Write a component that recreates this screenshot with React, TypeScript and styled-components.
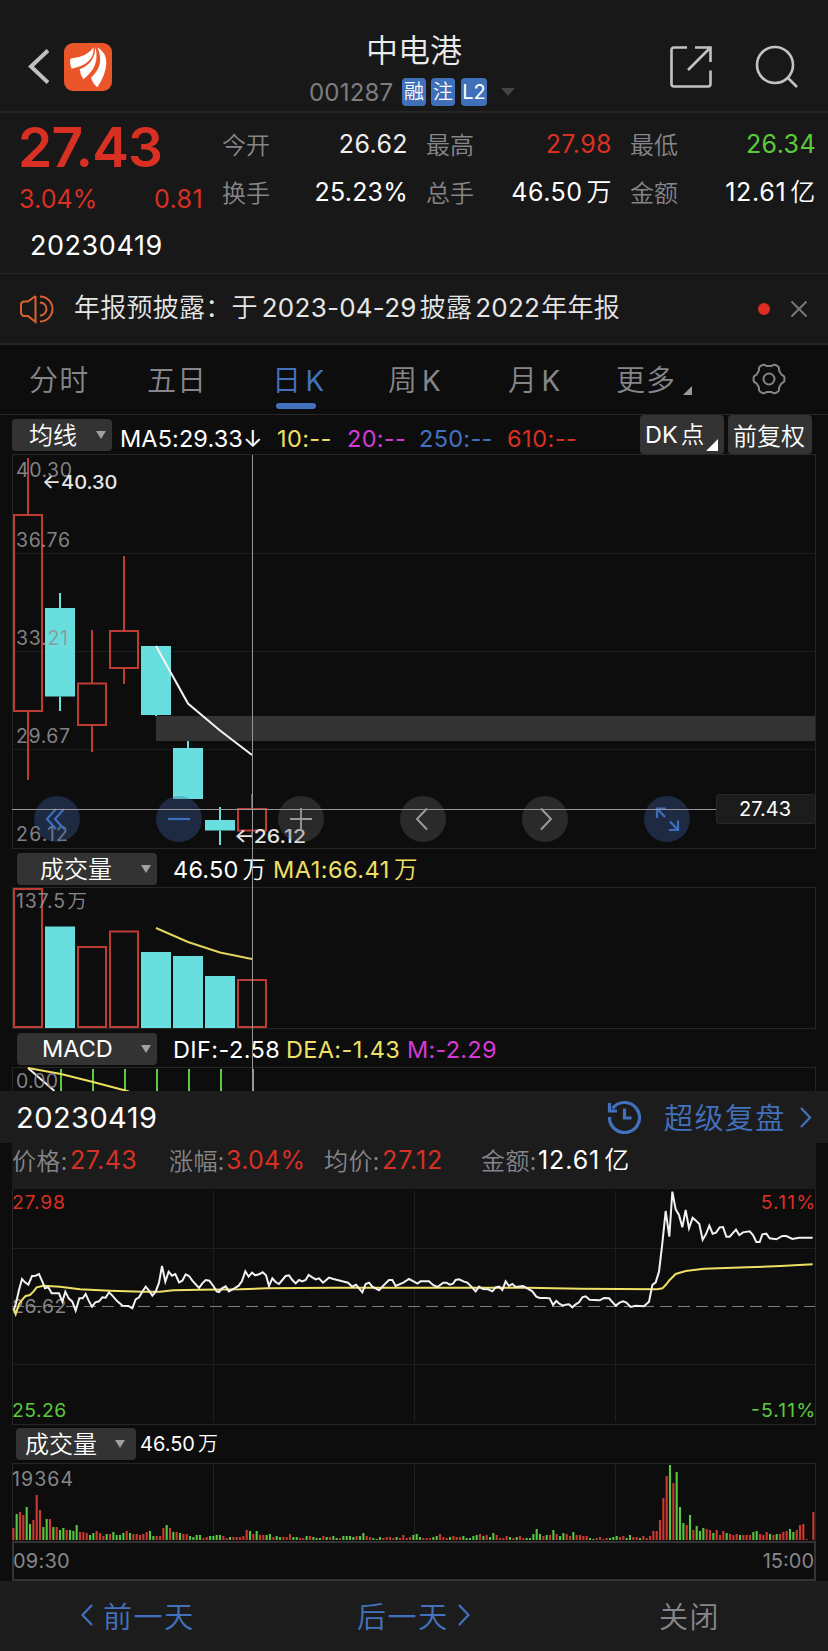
import React from 'react';
import styled, { createGlobalStyle } from 'styled-components';

const c = {
  red: '#d93024',
  candle: '#bd3c35',
  green: '#5bcb3c',
  cyan: '#68dfde',
  yellow: '#efe065',
  magenta: '#d63ad6',
  blue: '#4272bd',
  gray: '#86868a',
  line: '#262626',
  page: '#0d0d0d',
  head: '#181818',
  panel: '#1c1c1c',
  chip: '#333333',
};

const Global = createGlobalStyle`
  * { box-sizing: border-box; }
  body { margin: 0; background: ${c.page}; }
  body, button { font-family: Inter, "Noto Sans CJK SC", sans-serif; }
  svg { display: block; }
`;

const Screen = styled.div`
  position: relative;
  width: 828px;
  height: 1651px;
  overflow: hidden;
  display: flex;
  flex-direction: column;
  background: ${c.page};
  color: #fff;
`;

type TextProps = {
  $s: number;
  $c?: string;
  $ls?: number;
  $w?: number;
  $ml?: number;
  $weight?: number;
};
const Text = styled.span<TextProps>`
  display: block;
  flex: none;
  white-space: nowrap;
  font-size: ${p => p.$s}px;
  color: ${p => p.$c || '#fff'};
  letter-spacing: ${p => p.$ls || 0}px;
  font-weight: ${p => p.$weight || 400};
  margin-left: ${p => p.$ml || 0}px;
  width: ${p => (p.$w ? p.$w + 'px' : 'auto')};
`;
const Han = styled(Text)`
  font-family: "Noto Sans CJK SC DemiLight", "Noto Sans CJK SC", sans-serif;
  font-weight: 350;
`;
/* Chinese unit or word that follows Latin text on the same line */
const Unit = styled.span<{ $gap?: number; $after?: number }>`
  font-family: "Noto Sans CJK SC DemiLight", "Noto Sans CJK SC", sans-serif;
  font-weight: 350;
  line-height: 0;
  margin-left: ${p => p.$gap ?? 4}px;
  margin-right: ${p => p.$after || 0}px;
`;
const Latin = styled.span`
  font-family: Inter, sans-serif;
  font-weight: 400;
  font-size: 0.96em;
  line-height: 0;
  margin-left: 4px;
`;

/* header */
const Header = styled.header`
  flex: none;
  height: 113px;
  background: ${c.head};
  border-bottom: 2px solid ${c.line};
  display: grid;
  grid-template-columns: 286px 256px 286px;
`;
const HeadLeft = styled.div`
  display: flex;
  align-items: flex-start;
  gap: 15px;
  padding: 43px 0 0 28px;
`;
const HeadRight = styled.div`
  display: flex;
  align-items: flex-start;
  gap: 42px;
  padding: 45px 0 0 127px;
`;
const HeadMid = styled.div`
  display: flex;
  flex-direction: column;
  padding-top: 28px;
`;
const Title = styled(Han)`
  text-align: center;
  line-height: 40px;
`;
const CodeRow = styled.div`
  display: flex;
  align-items: center;
  height: 28px;
  margin-top: 10px;
  padding-left: 23px;
`;
const Badge = styled.span<{ $w: number; $ml: number }>`
  width: ${p => p.$w}px;
  margin-left: ${p => p.$ml}px;
  height: 28px;
  line-height: 28px;
  border-radius: 4px;
  background: #4070ba;
  color: #fff;
  font-size: 20px;
  text-align: center;
`;
const Caret = styled.i<{ $w: number; $h: number; $c: string; $ml?: number }>`
  display: block;
  flex: none;
  width: ${p => p.$w}px;
  height: ${p => p.$h}px;
  margin-left: ${p => p.$ml || 0}px;
  background: ${p => p.$c};
  clip-path: polygon(0 0, 100% 0, 50% 100%);
`;
const Corner = styled.i<{ $s: number; $c: string; $mb: number }>`
  display: block;
  flex: none;
  align-self: flex-end;
  width: ${p => p.$s}px;
  height: ${p => p.$s}px;
  margin-bottom: ${p => p.$mb}px;
  background: ${p => p.$c};
  clip-path: polygon(100% 0, 100% 100%, 0 100%);
`;

/* quote */
const Quote = styled.section`
  flex: none;
  height: 161px;
  background: ${c.head};
  border-bottom: 1px solid ${c.line};
  display: grid;
  grid-template-columns: 222px 1fr;
  grid-template-rows: 108px 1fr;
`;
const PriceBlock = styled.div`
  padding: 6px 19px 0 18px;
`;
const BigPrice = styled(Text)`
  line-height: 56px;
`;
const Change = styled.div`
  display: flex;
  justify-content: space-between;
  line-height: 32px;
  margin-top: 8px;
  padding-left: 1px;
`;
const Stats = styled.dl`
  margin: 0;
  padding-top: 8px;
  display: grid;
  grid-template-columns: 186px 204px 204px;
  grid-auto-rows: 48px;
`;
const Stat = styled.div<{ $pl: number }>`
  display: flex;
  justify-content: space-between;
  line-height: 47px;
  padding-left: ${p => p.$pl}px;
`;
const StatName = styled(Han)`
  line-height: 45px;
`;
const QuoteDate = styled(Text)`
  grid-column: 1 / -1;
  padding-left: 30px;
  line-height: 49px;
`;

/* notice */
const Notice = styled.section`
  flex: none;
  height: 71px;
  background: ${c.head};
  border-bottom: 2px solid ${c.line};
  display: flex;
  align-items: center;
  padding-left: 19px;
`;
const NoticeText = styled(Text)`
  padding-bottom: 3px;
`;
const Dot = styled.i`
  width: 12px;
  height: 12px;
  border-radius: 50%;
  background: #dc2d21;
  margin-left: auto;
`;
const CloseX = styled.svg`
  margin: 0 20px 0 20px;
`;

/* tabs */
const Tabs = styled.nav`
  flex: none;
  height: 70px;
  border-bottom: 1px solid ${c.line};
  display: flex;
  line-height: 66px;
  padding-left: 29px;
`;
const Tab = styled(Han)<{ $on?: boolean }>`
  position: relative;
  &::after {
    content: '';
    display: ${p => (p.$on ? 'block' : 'none')};
    position: absolute;
    left: 4px;
    bottom: 5px;
    width: 40px;
    height: 6px;
    border-radius: 3px;
    background: ${c.blue};
  }
`;
const Gear = styled.svg`
  margin: 17px 0 0 60px;
`;

/* indicator rows */
const Row = styled.div<{ $h: number; $pl: number; $line: number }>`
  flex: none;
  height: ${p => p.$h}px;
  padding-left: ${p => p.$pl}px;
  display: flex;
  line-height: ${p => p.$line}px;
`;
const Chip = styled.button<{ $w: number; $h: number; $mt?: number; $ml?: number; $pl: number }>`
  flex: none;
  border: 0;
  width: ${p => p.$w}px;
  height: ${p => p.$h}px;
  margin: ${p => p.$mt || 0}px 0 0 ${p => p.$ml || 0}px;
  padding: 0 0 0 ${p => p.$pl}px;
  border-radius: 4px;
  background: ${c.chip};
  display: flex;
  align-items: center;
  text-align: left;
  line-height: ${p => p.$h - 2}px;
`;
const ChipHan = styled(Han)`
  padding-bottom: 2px;
`;
const Plot = styled.svg<{ $h: number }>`
  flex: none;
  width: 804px;
  height: ${p => p.$h}px;
  margin-left: 12px;
  font-family: Inter, "Noto Sans CJK SC", sans-serif;
`;
const KArea = styled.div`
  position: relative;
  flex: none;
`;
const Controls = styled.div`
  position: absolute;
  left: 34px;
  top: 342px;
  display: flex;
  gap: 76px;
`;
const Round = styled.span<{ $blue?: boolean }>`
  width: 46px;
  height: 46px;
  border-radius: 50%;
  display: flex;
  align-items: center;
  justify-content: center;
  background: ${p => (p.$blue ? 'rgba(59,96,164,.35)' : 'rgba(96,96,100,.35)')};
  color: ${p => (p.$blue ? '#3c6fc0' : '#9a9a9d')};
`;
const CrossH = styled.i`
  position: absolute;
  left: 12px;
  top: 355px;
  width: 704px;
  height: 1px;
  background: #969696;
`;
const CrossV = styled.i`
  position: absolute;
  left: 252px;
  top: 455px;
  width: 1px;
  height: 636px;
  background: #969696;
`;
const PriceTag = styled.span`
  position: absolute;
  left: 716px;
  top: 340px;
  width: 100px;
  height: 30px;
  line-height: 29px;
  border: 1px solid #282828;
  border-radius: 3px;
  background: #1c1c1c;
  font-size: 20px;
  padding-left: 22px;
`;

/* replay panel */
const PanelHead = styled.div`
  flex: none;
  height: 52px;
  background: ${c.panel};
  display: flex;
  align-items: center;
  padding-left: 16px;
`;
const ReplayLink = styled(Han)`
  padding-bottom: 2px;
`;
const Info = styled.div`
  flex: none;
  width: 804px;
  height: 46px;
  margin-left: 12px;
  background: ${c.panel};
  display: flex;
  line-height: 34px;
`;
const Times = styled.div`
  flex: none;
  width: 804px;
  height: 40px;
  margin-left: 12px;
  border: 2px solid #333;
  display: flex;
  justify-content: space-between;
  line-height: 37px;
`;
const Footer = styled.footer`
  flex: none;
  height: 70px;
  background: ${c.panel};
  display: flex;
  align-items: center;
  padding: 0 0 2px 81px;
`;

const Logo = () => (
  <svg width="48" height="48" viewBox="192 129 144 144">
    <rect x="192" y="129" width="144" height="144" rx="27" fill="#ea5529" />
    <g fill="#fff">
      <path d="M210 180Q211 175 217 175Q262 170 281 142Q284 193 215 206Q209 193 210 180Z" />
      <path d="M286 142Q302 198 250 238Q241 225 239 208Q285 190 286 142Z" />
      <path d="M292 142Q320 158 319 190Q317 226 292 262Q278 250 273 233Q316 195 292 142Z" />
    </g>
  </svg>
);

const gear = Array.from({ length: 120 }, (_, i) => {
  const t = (i / 120) * Math.PI * 2;
  const r = 14.2 + 1.3 * Math.tanh(2 * Math.cos(6 * t));
  return `${(17 + r * Math.cos(t)).toFixed(2)},${(17 + r * Math.sin(t)).toFixed(2)}`;
}).join(' ');

const candles = [
  { up: true, top: 515, bottom: 712, high: 458, low: 780, vol: 888 },
  { up: false, top: 608, bottom: 696.5, high: 593, low: 711, vol: 926.5 },
  { up: true, top: 683.5, bottom: 726, high: 630, low: 752, vol: 946 },
  { up: true, top: 631, bottom: 669, high: 556, low: 684, vol: 930.5 },
  { up: false, top: 646, bottom: 715, high: 646, low: 716, vol: 952 },
  { up: false, top: 748, bottom: 799, high: 741, low: 799, vol: 956 },
  { up: false, top: 820, bottom: 830.5, high: 807, low: 845, vol: 976 },
  { up: true, top: 809, bottom: 831.5, high: 794, low: 838, vol: 979 },
];

const ticks =
  'r12 g26 r28 r25 g33 g16 r20 r45 r30 g13 g21 r21 g13 r13 g10 g12 r10 g10 g9 g15 r8 r8 r7 g5 g7 r9 r7 r4 g6 r6 g8 g5 g5 g7 r9 g7 r6 r6 r5 r6 r8 g9 g4 r4 r4 r12 g15 r12 g8 r8 g7 r6 r6 g4 g3 g5 g5 r2 r3 g4 g4 g5 g5 r4 r2 g3 r3 r3 r3 r4 r10 g9 r6 g9 r5 r5 g5 g6 r3 g4 g3 r3 r3 r6 g3 g3 r2 r2 g4 r4 g3 g2 g2 r4 g3 r3 g4 g2 r2 g4 g4 g4 g3 r4 g4 g7 r4 r3 g2 g1 g3 r2 r3 r3 r2 g3 r2 r5 r2 r3 g5 g6 g3 r2 r2 r2 g3 g4 r6 r3 r2 g3 r4 r3 r3 g4 g2 g2 g4 g5 r6 g4 r5 g3 g7 r5 r2 r2 r4 g3 r2 g3 r4 r2 g2 g2 g6 g11 g6 r4 g5 r5 g10 r6 g4 g7 r6 r4 g8 r5 r5 r4 r4 g2 g1 r2 r3 r1 r2 g2 g3 g4 r3 r4 g2 g5 r3 r3 g2 r4 r2 r4 r9 r9 r20 r42 r64 g75 r57 g68 g33 g17 r15 g25 r10 g14 g9 g12 r11 r10 g7 r10 r5 r9 g7 r6 r5 r6 g5 r5 r5 r5 g8 g9 r6 r5 r8 g6 r5 g6 r6 r8 r9 g11 g8 r10 r15 r16 r1 r0 r28'.split(' ');

const morning =
  '42,688 48,670 57,630 66,597 75,607 85,614 96,588 107,587 117,582 127,605 135,625 145,622 155,640 177,640 187,665 196,635 206,655 217,665 227,692 238,655 248,655 257,642 266,662 276,680 286,667 297,664 307,652 317,653 327,637 337,647 352,664 368,677 385,678 397,685 407,658 417,652 427,635 437,620 447,632 457,647 467,635 477,608 486,558 496,605 506,575 516,587 526,582 537,607 547,602 557,583 567,588 577,602 597,624 607,610 617,600 628,602 640,618 650,634 657,636 667,624 677,619 687,634 700,627 716,617 726,603 736,574 746,590 756,578 766,586 777,583 788,577 798,586 807,618 817,595 827,606 837,612 847,600 857,588 867,586 877,600 887,610 897,600 907,604 917,600 926,585 937,592 947,598 957,595 969,608 987,593 1000,597 1027,604 1044,608 1057,620 1068,614 1087,637 1097,612 1107,608 1117,620 1137,631 1150,617 1167,600 1177,600 1187,618 1210,608 1227,597';
const afternoon =
  '1242,605 1252,611 1262,604 1287,604 1299,615 1312,621 1330,608 1339,608 1349,614 1359,611 1367,600 1377,598 1392,605 1402,608 1414,620 1427,634 1437,620 1449,627 1464,628 1477,634 1487,622 1497,620 1507,630 1517,604 1527,618 1537,612 1547,621 1569,618 1587,628 1597,634 1609,650 1619,654 1639,654 1649,655 1659,675 1669,663 1679,672 1689,677 1697,674 1707,673 1717,682 1727,673 1737,667 1747,652 1757,649 1769,659 1799,661 1812,654 1827,655 1847,677 1859,668 1869,664 1879,668 1892,681 1907,677 1932,679 1947,665 1957,615 1967,607 1977,575 1987,490 1997,393 2008,470 2017,335 2027,388 2037,405 2047,442 2057,390 2067,445 2078,413 2088,422 2098,432 2108,479 2118,462 2128,437 2138,461 2148,458 2159,442 2169,441 2179,470 2189,470 2208,449 2218,465 2229,457 2249,454 2259,465 2269,486 2279,486 2287,463 2299,461 2309,475 2329,478 2347,468 2359,468 2377,477 2397,473 2438,473';
const average =
  '40,685 47,703 57,672 70,655 77,648 90,645 100,635 110,622 130,617 180,620 240,628 330,632 430,635 480,635 520,631 600,629 720,628 800,625 1000,623 1242,623 1582,623 1742,626 1972,628 1987,625 1997,615 2009,600 2027,582 2057,573 2112,566 2242,562 2342,558 2438,553';

const axis = (y: number, t: string, len: number) => (
  <text key={t} x="16" y={y} fontSize="19.5" fill="#929296" fillOpacity=".9" textLength={len}>{t}</text>
);

const KPlot = () => (
  <Plot $h={395} viewBox="12 454 804 395">
    <g shapeRendering="crispEdges" fill="none" strokeWidth="1">
      <path d="M13 553.5H815M13 651.5H815M13 749.5H815" stroke="#1c1c1c" />
      <rect x="12.5" y="454.5" width="803" height="394" stroke={c.line} />
    </g>
    <rect x="156" y="716" width="659" height="25" fill="#333" />
    {candles.map((k, i) => {
      const x = 13 + i * 32;
      const col = k.up ? c.candle : c.cyan;
      return (
        <g key={i}>
          <path d={`M${x + 15} ${k.high}V${k.top}M${x + 15} ${k.bottom}V${k.low}`} stroke={col} strokeWidth="2" />
          {k.up ? (
            <rect x={x + 1} y={k.top} width="28" height={k.bottom - k.top - 1} fill="none" stroke={col} strokeWidth="2" />
          ) : (
            <rect x={x} y={k.top} width="30" height={k.bottom - k.top} fill={col} />
          )}
        </g>
      );
    })}
    <path d="M156 646L188 703.5L220 730.5L252 755" fill="none" stroke="#f4f4f4" strokeWidth="2" />
    {axis(477, '40.30', 56)}
    {axis(547, '36.76', 54)}
    {axis(645, '33.21', 52)}
    {axis(743, '29.67', 54)}
    {axis(841, '26.12', 52)}
    <g fontSize="19" fontWeight="500" fill="#e6e6e6">
      <text x="42" y="488.5" textLength="75.500" lengthAdjust="spacingAndGlyphs">←40.30</text>
      <text x="234" y="843" textLength="72" lengthAdjust="spacingAndGlyphs">←26.12</text>
    </g>
  </Plot>
);

const VolPlot = () => (
  <Plot $h={142} viewBox="12 887 804 142">
    <rect x="12.5" y="887.5" width="803" height="141" fill="none" stroke={c.line} shapeRendering="crispEdges" />
    {candles.map((k, i) =>
      k.up ? (
        <rect key={i} x={14 + i * 32} y={k.vol + 1} width="28" height={1026 - k.vol} fill="none" stroke={c.candle} strokeWidth="2" />
      ) : (
        <rect key={i} x={13 + i * 32} y={k.vol} width="30" height={1028 - k.vol} fill={c.cyan} />
      )
    )}
    <path d="M156 928L188 942L220 952.5L252 959" fill="none" stroke="#e2d45c" strokeWidth="2" />
    {axis(908, '137.5', 49)}
    <text x="67.5" y="908" fontSize="19.5" fill={c.gray} fontWeight="350">万</text>
  </Plot>
);

const MacdPlot = () => (
  <Plot $h={24} viewBox="12 1067 804 24">
    <path d="M12.5 1091V1067.5H815.5V1091" fill="none" stroke={c.line} shapeRendering="crispEdges" />
    {[61, 93, 125, 157, 189, 221, 253].map(x => (
      <rect key={x} x={x - 1} y="1069" width="2" height="22" fill={c.green} />
    ))}
    <path d="M28 1068L54.5 1091" stroke="#f4f4f4" strokeWidth="2" />
    <path d="M28 1068L61 1074L93 1082L129 1091.5" fill="none" stroke={c.yellow} strokeWidth="2" />
    {axis(1087.5, '0.00', 42)}
  </Plot>
);

const DayPlot = () => (
  <Plot $h={236} viewBox="36 327 2412 708">
    <g shapeRendering="crispEdges" fill="none" strokeWidth="3">
      <path d="M640.5 333V1026M1243.5 333V1026M1846.5 333V1026M39 505.5H2445M39 853.5H2445" stroke="#1e1e1e" />
      <path d="M37.5 327V1033.5H2446.5V327" stroke={c.line} />
      <path d="M36 679.5H2445" stroke="#7c7c7c" strokeDasharray="36 18" />
    </g>
    <g fontSize="58">
      <text x="36" y="387" fill={c.red} textLength="159">27.98</text>
      <text x="36" y="699" fill={c.gray} textLength="163">26.62</text>
      <text x="36" y="1011" fill={c.green} textLength="163">25.26</text>
      <text x="2282" y="387" fill={c.red} textLength="164">5.11%</text>
      <text x="2253" y="1011" fill={c.green} textLength="193">-5.11%</text>
    </g>
    <polyline points={average} fill="none" stroke={c.yellow} strokeWidth="6" />
    <polyline points={`${morning} ${afternoon}`} fill="none" stroke="#f2f2f2" strokeWidth="6" />
  </Plot>
);

const TickPlot = () => (
  <Plot $h={78} viewBox="12 1463 804 78">
    <g shapeRendering="crispEdges" fill="none">
      <path d="M213.5 1465V1540M414.5 1465V1540M615.5 1465V1540" stroke="#222" />
      <path d="M12.5 1541V1463.5H815.5V1541" stroke={c.line} />
    </g>
    {ticks.map((t, i) => {
      const h = Number(t.slice(1));
      return <rect key={i} x={12.3 + (i * 10) / 3} y={1540 - h} width="2.1" height={h} fill={t[0] === 'r' ? '#c93a31' : '#58c540'} />;
    })}
    <text x="12" y="1486" fontSize="19.5" fill={c.gray} textLength="61">19364</text>
  </Plot>
);

const Ico = ({ d, w = 46, sw = 2.2 }: { d: string; w?: number; sw?: number }) => (
  <svg width={w} height={w} viewBox={`0 0 ${w} ${w}`} fill="none" stroke="currentColor" strokeWidth={sw}>
    <path d={d} />
  </svg>
);

const Chev = ({ dir, h, col }: { dir: 'l' | 'r'; h: number; col: string }) => {
  const w = h / 2;
  const d = dir === 'l' ? `M${w + 1} 1L1.5 ${w + 1}L${w + 1} ${h + 1}` : `M1 1L${w + 0.5} ${w + 1}L1 ${h + 1}`;
  return (
    <svg width={w + 3} height={h + 2} fill="none" stroke={col} strokeWidth="2.2">
      <path d={d} />
    </svg>
  );
};

const stats = [
  { k: '今开', v: '26.62', unit: '', col: '#eee', ls: 0.4 },
  { k: '最高', v: '27.98', unit: '', col: c.red, ls: 0.4 },
  { k: '最低', v: '26.34', unit: '', col: c.green, ls: 0.4 },
  { k: '换手', v: '25.23%', unit: '', col: '#fff', ls: 0.2 },
  { k: '总手', v: '46.50', unit: '万', col: '#fff', ls: 0.5 },
  { k: '金额', v: '12.61', unit: '亿', col: '#fff', ls: 0.7 },
];

export default function App() {
  return (
    <Screen>
      <Global />
      <Header>
        <HeadLeft>
          <svg width="21" height="48" fill="none" stroke="#c0c0c0" strokeWidth="4">
            <path d="M20 7.5L3 23.5L20 39.5" />
          </svg>
          <Logo />
        </HeadLeft>
        <HeadMid>
          <Title $s={32} $c="#ececec">中电港</Title>
          <CodeRow>
            <Text $s={24} $c="#7d7d81" $ls={0.2} $w={84}>001287</Text>
            <Badge $w={24} $ml={9}><Unit $gap={0}>融</Unit></Badge>
            <Badge $w={24} $ml={5}><Unit $gap={0}>注</Unit></Badge>
            <Badge $w={26} $ml={6}>L2</Badge>
            <Caret $w={14} $h={8} $c="#444" $ml={14} />
          </CodeRow>
        </HeadMid>
        <HeadRight>
          <svg width="44" height="44" fill="none" stroke="#c2c2c2" strokeWidth="2.6">
            <path d="M18 2.5H5Q2.5 2.5 2.5 5V39Q2.5 41.5 5 41.5H39Q41.5 41.5 41.5 39V25.5M26 2.5H41.5V17M41 3L19 25" />
          </svg>
          <svg width="44" height="44" fill="none" stroke="#c2c2c2" strokeWidth="2.6">
            <circle cx="20" cy="20" r="18" />
            <path d="M33 33L42 42" />
          </svg>
        </HeadRight>
      </Header>

      <Quote>
        <PriceBlock>
          <BigPrice $s={55} $c={c.red} $weight={600} $ls={-0.8}>27.43</BigPrice>
          <Change>
            <Text $s={25} $c={c.red} $ls={0.1}>3.04%</Text>
            <Text $s={25} $c={c.red} $ls={0.4}>0.81</Text>
          </Change>
        </PriceBlock>
        <Stats>
          {stats.map((s, i) => (
            <Stat key={s.k} $pl={i % 3 ? 18 : 0}>
              <StatName as="dt" $s={24} $c={c.gray}>{s.k}</StatName>
              <Text as="dd" $s={25} $c={s.col} $ls={s.ls}>
                {s.v}
                {s.unit && <Unit>{s.unit}</Unit>}
              </Text>
            </Stat>
          ))}
        </Stats>
        <QuoteDate $s={27} $ls={0.55}>20230419</QuoteDate>
      </Quote>

      <Notice>
        <svg width="36" height="30" fill="none" stroke="#d9622f" strokeWidth="2">
          <path d="M16.5 2V28L9 22H4.500Q2 21 2 18V11Q2 8.500 4.500 7.500H9L16.500 2M21 2.500A12.500 12.500 0 0 1 21 27.500M21 8.500A6.500 6.500 0 0 1 21 21.500" />
        </svg>
        <NoticeText $s={26} $c="#e6e6e6" $ml={19} $ls={0.25}>
          <Unit $gap={0} $after={4}>年报预披露：于</Unit>
          2023-04-29
          <Unit $gap={3} $after={3}>披露</Unit>
          2022
          <Unit $gap={1}>年年报</Unit>
        </NoticeText>
        <Dot />
        <CloseX width="18" height="18" fill="none" stroke="#77777a" strokeWidth="2">
          <path d="M1.500 1.500L16.500 16.500M16.500 1.500L1.500 16.500" />
        </CloseX>
      </Notice>

      <Tabs>
        <Tab $s={29} $c={c.gray} $w={118} $ls={1.3}>分时</Tab>
        <Tab $s={29} $c={c.gray} $w={125} $ls={1}>五日</Tab>
        <Tab $s={29} $c={c.blue} $w={116} $ls={0.5} $on>日<Latin>K</Latin></Tab>
        <Tab $s={29} $c={c.gray} $w={120} $ls={1}>周<Latin>K</Latin></Tab>
        <Tab $s={29} $c={c.gray} $w={108} $ls={0.5}>月<Latin>K</Latin></Tab>
        <Tab $s={29} $c={c.gray} $w={67} $ls={1}>更多</Tab>
        <Corner $s={9} $c="#9a9a9d" $mb={19} />
        <Gear width="34" height="34" fill="none" stroke="#858589" strokeWidth="2">
          <polygon points={gear} strokeLinejoin="round" />
          <circle cx="17" cy="17" r="5.500" />
        </Gear>
      </Tabs>

      <Row $h={39} $pl={12} $line={48}>
        <Chip $w={100} $h={32} $mt={4} $pl={17}>
          <ChipHan $s={24} $w={67}>均线</ChipHan>
          <Caret $w={10} $h={8} $c="#a0a0a0" />
        </Chip>
        <Text $s={23.5} $ml={8} $w={157} $ls={0.1}>MA5:29.33↓</Text>
        <Text $s={23.5} $w={70} $ls={0.4} $c={c.yellow}>10:--</Text>
        <Text $s={23.5} $w={72} $ls={0.3} $c={c.magenta}>20:--</Text>
        <Text $s={23.5} $w={88} $ls={0.3} $c={c.blue}>250:--</Text>
        <Text $s={23.5} $w={133} $ls={0.5} $c={c.red}>610:--</Text>
        <Chip $w={84} $h={39} $pl={5}>
          <Text $s={23.5} $w={61}>DK<Unit $gap={3}>点</Unit></Text>
          <Corner $s={12} $c="#fff" $mb={3} />
        </Chip>
        <Chip $w={84} $h={39} $ml={4} $pl={5}>
          <Han $s={24}>前复权</Han>
        </Chip>
      </Row>

      <KArea>
        <KPlot />
        <Controls>
          <Round $blue><Ico d="M22 13L13 23L22 33M30 13L21 23L30 33" /></Round>
          <Round $blue><Ico d="M12 23H34" /></Round>
          <Round><Ico d="M12 23H34M23 12V34" sw={1.8} /></Round>
          <Round><Ico d="M27 12.500L17 23L27 33.500" sw={2} /></Round>
          <Round><Ico d="M19 12.500L29 23L19 33.500" sw={2} /></Round>
          <Round $blue><Ico d="M22 12.500H13V22M13 12.500L21 21M25 34H34V24.500M34 34L26 25.500" /></Round>
        </Controls>
        <CrossH />
        <PriceTag>27.43</PriceTag>
      </KArea>

      <Row $h={38} $pl={17} $line={42}>
        <Chip $w={140} $h={32} $mt={4} $pl={23}>
          <ChipHan $s={24} $w={101}>成交量</ChipHan>
          <Caret $w={10} $h={8} $c="#a0a0a0" />
        </Chip>
        <Text $s={23.5} $ml={16} $w={100} $ls={0.2}>46.50<Unit>万</Unit></Text>
        <Text $s={23.5} $c={c.yellow} $ls={0.5}>MA1:66.41<Unit>万</Unit></Text>
      </Row>
      <VolPlot />
      <Row $h={38} $pl={17} $line={42}>
        <Chip $w={140} $h={32} $mt={4} $pl={25}>
          <Text $s={23.5} $w={99}>MACD</Text>
          <Caret $w={10} $h={8} $c="#a0a0a0" />
        </Chip>
        <Text $s={23.5} $ml={16} $w={113} $ls={0.4}>DIF:-2.58</Text>
        <Text $s={23.5} $w={121} $ls={0.35} $c={c.yellow}>DEA:-1.43</Text>
        <Text $s={23.5} $ls={0.25} $c={c.magenta}>M:-2.29</Text>
      </Row>
      <MacdPlot />

      <PanelHead>
        <Text $s={29} $ls={0.45} $w={591}>20230419</Text>
        <svg width="34" height="34" fill="none" stroke={c.blue} strokeWidth="3.200">
          <path d="M2.500 17A15 15 0 1 0 5.500 8.500M2.500 3V11H10M17.500 8.500V18H24.500" />
        </svg>
        <ReplayLink $s={29} $c={c.blue} $ls={1.4} $ml={23} $w={136}>超级复盘</ReplayLink>
        <Chev dir="r" h={19} col={c.blue} />
      </PanelHead>
      <Info>
        <Han $s={24} $c={c.gray} $w={58} $ls={0.4}>价格:</Han>
        <Text $s={25} $ls={0.4} $c={c.red} $w={99}>27.43</Text>
        <Han $s={24} $c={c.gray} $w={57} $ls={0.4}>涨幅:</Han>
        <Text $s={25} $ls={0.3} $c={c.red} $w={98}>3.04%</Text>
        <Han $s={24} $c={c.gray} $w={58} $ls={0.4}>均价:</Han>
        <Text $s={25} $ls={0.9} $c={c.red} $w={99}>27.12</Text>
        <Han $s={24} $c={c.gray} $w={57} $ls={0.4}>金额:</Han>
        <Text $s={25} $ls={0.9}>12.61<Unit>亿</Unit></Text>
      </Info>
      <DayPlot />
      <Row $h={38} $pl={16} $line={39}>
        <Chip $w={120} $h={32} $mt={3} $pl={9}>
          <ChipHan $s={24} $w={90}>成交量</ChipHan>
          <Caret $w={10} $h={8} $c="#a0a0a0" />
        </Chip>
        <Text $s={20} $ml={4}>46.50<Unit $gap={3}>万</Unit></Text>
      </Row>
      <TickPlot />
      <Times>
        <Text $s={20} $ml={-1} $ls={0.2} $c={c.gray}>09:30</Text>
        <Text $s={20} $c={c.gray}>15:00</Text>
      </Times>
      <Footer>
        <Chev dir="l" h={20} col={c.blue} />
        <Han $s={29} $c={c.blue} $ls={1.6} $ml={9} $w={254}>前一天</Han>
        <Han $s={29} $c={c.blue} $ls={1.6} $w={101}>后一天</Han>
        <Chev dir="r" h={20} col={c.blue} />
        <Han $s={29} $c={c.gray} $ls={1.4} $ml={188}>关闭</Han>
      </Footer>
      <CrossV />
    </Screen>
  );
}
